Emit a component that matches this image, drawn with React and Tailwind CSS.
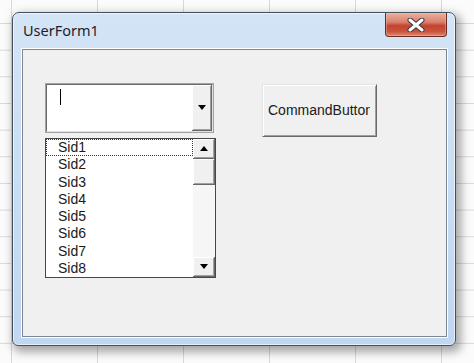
import React from "react";

const items = ["Sid1", "Sid2", "Sid3", "Sid4", "Sid5", "Sid6", "Sid7", "Sid8"];

const Arrow = ({ up }) => (
  <svg width="8" height="5" viewBox="0 0 8 5">
    <path d={up ? "M0 5 L8 5 L4 0 Z" : "M0 0 L8 0 L4 5 Z"} fill="#000" />
  </svg>
);

const App = () => {
  return (
    <div className="w-[474px] h-[363px] overflow-hidden bg-[#fbfbfb] bg-[linear-gradient(to_right,#d8d8d8_1px,transparent_1px),linear-gradient(to_bottom,#d8d8d8_1px,transparent_1px)] bg-size-[86px_26.67px] bg-position-[11px_23px] pt-[12px] pl-[12px] font-['Liberation_Sans',Arial,sans-serif]">
      <div className="w-[444px] h-[334px] flex flex-col rounded-t-[7px] rounded-b-[6px] border border-[#45505c] bg-[linear-gradient(to_bottom,#d3e4f6,#bfd7f1)] shadow-[inset_0_0_0_1px_rgba(255,255,255,0.6),3px_4px_10px_2px_rgba(0,0,0,0.35)]">
        {/* title bar */}
        <div className="h-[36px] flex items-start justify-between">
          <span className="self-center pl-[10px] text-[14.5px] text-[#221b2c] font-['Noto_Sans',sans-serif]">
            UserForm1
          </span>
          <div className="mr-[8px] w-[62px] h-[24px] rounded-b-[4px] border border-t-0 border-[#6e2b22] bg-[linear-gradient(to_bottom,#eab0a0_0%,#d8806c_40%,#c4432f_55%,#c9533d_80%,#dc8a72_100%)] shadow-[inset_0_0_0_1px_rgba(255,200,190,0.35)] flex items-center justify-center">
            <svg width="18" height="14" viewBox="0 0 18 14">
              <path d="M3 2 L15 12 M15 2 L3 12" stroke="#3a3a3a" strokeWidth="5" strokeLinecap="round" />
              <path d="M3 2 L15 12 M15 2 L3 12" stroke="#ffffff" strokeWidth="3" strokeLinecap="round" />
            </svg>
          </div>
        </div>

        {/* client area */}
        <div className="ml-[9px] mr-[8px] h-[288px] border border-[#7c8793] ring-1 ring-white bg-[#f0f0f0] flex items-start pl-[22px] pt-[33px]">
          <div className="flex flex-col w-[171px]">
            {/* combo box */}
            <div className="w-[169px] h-[50px] border border-[#a3a3a3] flex">
              <div className="flex-1 flex bg-white border-t border-l border-[#6b6b6b] border-r-[#e3e3e3] border-b-[#e3e3e3] border-r border-b">
                <div className="ml-[13px] mt-[4px] w-px h-[16px] bg-black" />
                <div className="ml-auto w-[20px] h-full bg-[#f0f0f0] border-r border-b border-[#696969] shadow-[inset_1px_1px_0_#fff,inset_-1px_-1px_0_#a0a0a0] flex items-center justify-center">
                  <Arrow />
                </div>
              </div>
            </div>

            {/* list box */}
            <div className="mt-[5px] w-[171px] h-[140px] border border-[#474747] bg-white flex">
              <div className="flex-1 flex flex-col overflow-hidden">
                {items.map((item, i) => (
                  <div
                    key={item}
                    className={
                      i === 0
                        ? "h-[17.3px] shrink-0 leading-[15px] pl-[11px] border border-dotted border-[#333] text-[14px] text-[#1a1a1a]"
                        : "h-[17.3px] shrink-0 leading-[17px] pl-[12px] text-[14px] text-[#1a1a1a]"
                    }
                  >
                    {item}
                  </div>
                ))}
              </div>
              <div className="w-[22px] flex flex-col bg-[#f5f5f5]">
                <div className="h-[20px] bg-[#f0f0f0] border-r border-b border-[#696969] shadow-[inset_1px_1px_0_#fff,inset_-1px_-1px_0_#a0a0a0] flex items-center justify-center">
                  <Arrow up />
                </div>
                <div className="h-[26px] bg-[#f0f0f0] border-r border-b border-[#696969] shadow-[inset_1px_1px_0_#fff,inset_-1px_-1px_0_#a0a0a0]" />
                <div className="flex-1 bg-[#f6f6f6]" />
                <div className="h-[20px] bg-[#f0f0f0] border-r border-b border-[#696969] shadow-[inset_1px_1px_0_#fff,inset_-1px_-1px_0_#a0a0a0] flex items-center justify-center">
                  <Arrow />
                </div>
              </div>
            </div>
          </div>

          {/* command button */}
          <div className="ml-[46px] mt-[1px] w-[115px] h-[53px] bg-[#f0f0f0] border border-t-[#e3e3e3] border-l-[#e3e3e3] border-r-[#696969] border-b-[#696969] shadow-[inset_1px_1px_0_#fff,inset_-1px_-1px_0_#a0a0a0] flex items-center pl-[5px]">
            <span className="w-[102px] overflow-hidden whitespace-nowrap text-[14px] text-[#1a1a1a]">
              CommandButton
            </span>
          </div>
        </div>
      </div>
    </div>
  );
};

export default App;
